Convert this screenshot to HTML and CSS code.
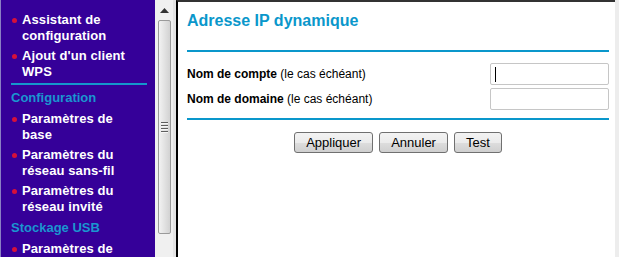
FILE: index.html
```html
<!DOCTYPE html>
<html lang="fr">
<head>
<meta charset="utf-8">
<title>Adresse IP dynamique</title>
<link rel="stylesheet" href="styles.css">
</head>
<body>
<div class="page">
  <div class="side">
    <nav class="nav">
      <ul class="menu">
        <li>Assistant de configuration</li>
        <li>Ajout d'un client WPS</li>
      </ul>
      <div class="sep"></div>
      <div class="sect">Configuration</div>
      <ul class="menu">
        <li>Paramètres de base</li>
        <li>Paramètres du réseau sans-fil</li>
        <li>Paramètres du réseau invité</li>
      </ul>
      <div class="sect">Stockage USB</div>
      <ul class="menu">
        <li>Paramètres de base</li>
      </ul>
    </nav>
    <div class="scroll">
      <div class="arrow"><svg width="9" height="5" viewBox="0 0 9 5"><path d="M0 5 L4.5 0 L9 5 Z" fill="#333"/></svg></div>
      <div class="thumb">
        <div class="grip"><span></span><span></span><span></span><span></span></div>
      </div>
    </div>
    <div class="gutter"></div>
  </div>
  <main class="main">
    <h1 class="title">Adresse IP dynamique</h1>
    <div class="rule"></div>
    <div class="form">
      <div class="row">
        <div class="label"><b>Nom de compte</b> (le cas échéant)</div>
        <div class="field"><span class="caret"></span></div>
      </div>
      <div class="row">
        <div class="label"><b>Nom de domaine</b> (le cas échéant)</div>
        <div class="field"></div>
      </div>
    </div>
    <div class="rule"></div>
    <div class="buttons">
      <button class="btn">Appliquer</button>
      <button class="btn">Annuler</button>
      <button class="btn">Test</button>
    </div>
  </main>
  <div class="edge"></div>
</div>
</body>
</html>
```

FILE: styles.css
```css
html, body {
  margin: 0;
  padding: 0;
  width: 619px;
  height: 257px;
  overflow: hidden;
  background: #ffffff;
  font-family: "Liberation Sans", Arial, sans-serif;
}

.page {
  display: flex;
  height: 257px;
}

.side {
  display: flex;
  flex: none;
  height: 257px;
}

.nav {
  width: 154px;
  border-left: 1px solid #8a7fc4;
  background: #350099;
  padding-top: 12px;
  box-sizing: content-box;
  overflow: hidden;
}

.menu {
  list-style: none;
  margin: 0;
  padding: 0 16px 0 11px;
}

.menu li {
  display: flex;
  color: #ffffff;
  font-weight: bold;
  font-size: 13px;
  line-height: 16px;
  margin-bottom: 4px;
  letter-spacing: 0.1px;
}

.menu li::before {
  content: "";
  flex: none;
  width: 5px;
  height: 5px;
  border-radius: 50%;
  background: #d6103a;
  margin: 6px 5px 0 0;
}

.sep {
  height: 2px;
  background: #1596cc;
  margin: -1px 8px 1px 10px;
}

.sect {
  color: #1a96d0;
  font-weight: bold;
  font-size: 13px;
  line-height: 16px;
  padding-left: 10px;
  margin: 5px 0 5px;
}

.scroll {
  width: 18px;
  background: #f0f0f0;
  display: flex;
  flex-direction: column;
  align-items: center;
}

.arrow {
  height: 20px;
  display: flex;
  align-items: center;
  justify-content: center;
}

.thumb {
  width: 13px;
  height: 214px;
  border: 1px solid #9a9a9a;
  border-radius: 2px;
  background: linear-gradient(to right, #f2f2f2, #e2e2e2 50%, #d2d2d2);
  display: flex;
  align-items: center;
  justify-content: center;
  box-sizing: border-box;
}

.grip {
  display: flex;
  flex-direction: column;
  gap: 1px;
}

.grip span {
  display: block;
  width: 7px;
  height: 1px;
  background: #5e5e5e;
  border-bottom: 1px solid #f5f5f5;
}

.gutter {
  width: 3px;
  background: #e4e4e4;
}

.main {
  flex: 1;
  border-left: 2px solid #000000;
  border-top: 2px solid #333333;
  padding: 10px 6px 0 9px;
}

.title {
  margin: 0 0 20px;
  font-size: 16px;
  line-height: 18px;
  font-weight: bold;
  color: #0a97cb;
}

.rule {
  height: 2px;
  background: #0a97cb;
}

.form {
  padding: 11px 0 8px;
  display: flex;
  flex-direction: column;
  gap: 3px;
}

.row {
  display: flex;
  align-items: center;
  justify-content: space-between;
  height: 22px;
}

.label {
  font-size: 12px;
  color: #000000;
}

.field {
  width: 119px;
  height: 22px;
  box-sizing: border-box;
  border: 1px solid #c6c6c6;
  border-radius: 2px;
  background: #ffffff;
  display: flex;
  align-items: center;
  padding-left: 4px;
}

.caret {
  width: 1px;
  height: 15px;
  background: #000000;
}

.buttons {
  display: flex;
  justify-content: center;
  gap: 6px;
  margin-top: 12px;
}

.btn {
  height: 21px;
  padding: 0 11px;
  margin: 0;
  font-family: "Liberation Sans", Arial, sans-serif;
  font-size: 13px;
  color: #000000;
  border: 1px solid #707070;
  border-radius: 3px;
  background: linear-gradient(to bottom, #f3f3f3, #ebebeb 50%, #dddddd 51%, #cfcfcf);
}

.edge {
  width: 4px;
  flex: none;
  background: #ededed;
}
```
